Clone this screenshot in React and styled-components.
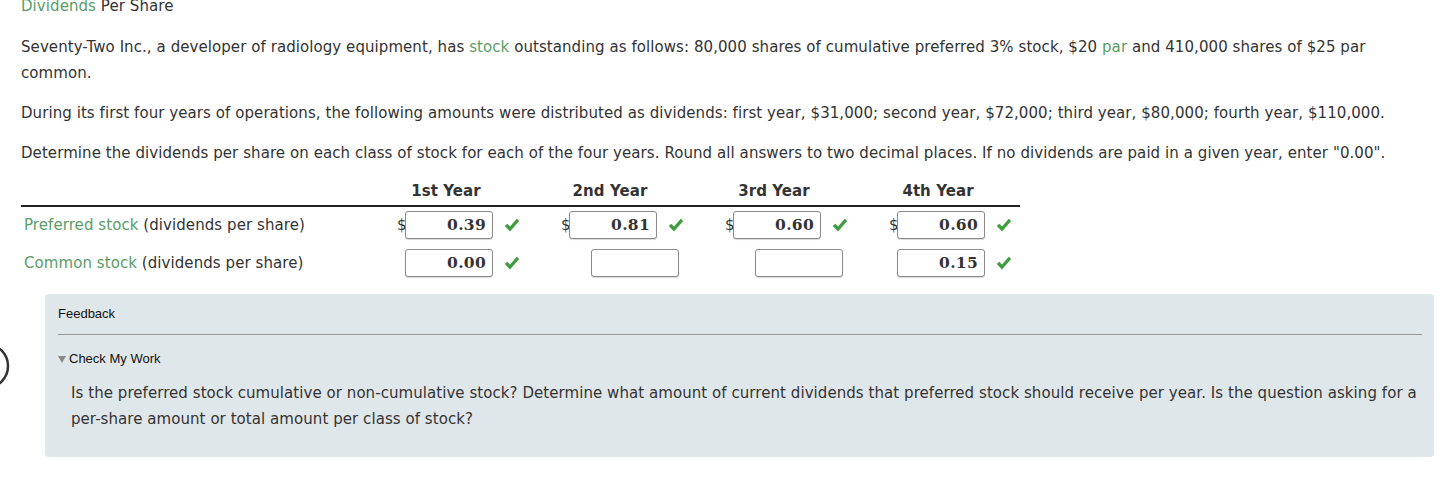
import styled, { createGlobalStyle } from "styled-components";

const GlobalStyle = createGlobalStyle`
  html, body {
    margin: 0;
    padding: 0;
    background: #fff;
  }
  body {
    font-family: "DejaVu Sans", Verdana, sans-serif;
    font-size: 15px;
    letter-spacing: 0.07px;
    color: #333;
  }
`;

const Page = styled.div`
  position: relative;
  width: 1442px;
  height: 492px;
  overflow: hidden;
  padding: 0 21px;
  box-sizing: border-box;
`;

const Term = styled.span`
  color: #5a9d68;
`;

const Title = styled.div`
  margin-top: -3px;
  line-height: 18px;
`;

const Para = styled.p`
  margin: 0;
  line-height: 26px;
  margin-top: ${(props) => props.$top || 0}px;
`;

const Table = styled.div`
  display: grid;
  grid-template-columns: 343px repeat(4, 164px);
  margin-top: 15px;
  width: 999px;
`;

const HeadCell = styled.div`
  font-weight: bold;
  text-align: center;
  line-height: 20px;
  padding-bottom: 4px;
  border-bottom: 2px solid #222;
`;

const LabelCell = styled.div`
  display: flex;
  align-items: center;
  height: ${(props) => (props.$first ? 36 : 40)}px;
  padding-left: 3px;
`;

const DataCell = styled.div`
  display: flex;
  align-items: center;
  justify-content: center;
  height: ${(props) => (props.$first ? 36 : 40)}px;
  padding-left: 50px;
`;

const Dollar = styled.span`
  flex-shrink: 0;
  width: 8px;
  font-size: 15px;
  text-align: right;
`;

const Input = styled.div`
  flex-shrink: 0;
  box-sizing: border-box;
  width: 88px;
  height: 28px;
  border: 1px solid #8a8a8a;
  border-radius: 3px;
  box-shadow: 0 1px 1px rgba(0, 0, 0, 0.15);
  background: #fff;
  font-family: "DejaVu Serif", Georgia, serif;
  font-weight: bold;
  font-size: 15.5px;
  letter-spacing: 0.3px;
  color: #333;
  text-align: right;
  line-height: 26px;
  padding-right: 6px;
`;

const CheckSlot = styled.span`
  flex-shrink: 0;
  width: 52px;
  padding-left: 11px;
  box-sizing: border-box;
  display: flex;
  align-items: center;
`;

const Feedback = styled.div`
  margin: 11px 0 0 24px;
  width: 1389px;
  height: 163px;
  box-sizing: border-box;
  background: #e0e7ea;
  border-radius: 4px;
  padding: 12px 12px 0 13px;
  font-family: "Liberation Sans", Arial, sans-serif;
  font-size: 13px;
  letter-spacing: 0;
  color: #111;
`;

const FeedbackHead = styled.div`
  line-height: 16px;
  padding-bottom: 12px;
  border-bottom: 1px solid #999;
`;

const Toggle = styled.div`
  display: flex;
  align-items: center;
  gap: 3px;
  margin-top: 16px;
  line-height: 16px;
`;

const Arrow = styled.span`
  width: 0;
  height: 0;
  border-left: 4px solid transparent;
  border-right: 4px solid transparent;
  border-top: 7px solid #8a8a8a;
`;

const Hint = styled.p`
  margin: 13px 0 0 13px;
  font-family: "DejaVu Sans", Verdana, sans-serif;
  font-size: 15px;
  letter-spacing: 0.06px;
  line-height: 26px;
  color: #333;
`;

const EdgeCircle = styled.svg`
  position: absolute;
  left: 0;
  top: 340px;
`;

function Check() {
  return (
    <svg width="16" height="15" viewBox="0 0 16 15">
      <path
        d="M0.8 8 L3.3 5.7 L6 8.6 L12.8 0.8 L15.2 3 L6 13.6 Z"
        fill="#3f9c3f"
      />
    </svg>
  );
}

function Answer({ value, dollar, checked }) {
  if (!checked) {
    return <Input>{value}</Input>;
  }
  return (
    <>
      <Dollar>{dollar ? "$" : ""}</Dollar>
      <Input>{value}</Input>
      <CheckSlot>
        <Check />
      </CheckSlot>
    </>
  );
}

const rows = [
  {
    term: "Preferred stock",
    values: [
      { value: "0.39", dollar: true, checked: true },
      { value: "0.81", dollar: true, checked: true },
      { value: "0.60", dollar: true, checked: true },
      { value: "0.60", dollar: true, checked: true },
    ],
  },
  {
    term: "Common stock",
    values: [
      { value: "0.00", dollar: false, checked: true },
      { value: "", dollar: false, checked: false },
      { value: "", dollar: false, checked: false },
      { value: "0.15", dollar: false, checked: true },
    ],
  },
];

export default function App() {
  return (
    <>
      <GlobalStyle />
      <Page>
        <Title>
          <Term>Dividends</Term> Per Share
        </Title>
        <Para $top={19}>
          Seventy-Two Inc., a developer of radiology equipment, has{" "}
          <Term>stock</Term> outstanding as follows: 80,000 shares of
          cumulative preferred 3% stock, $20 <Term>par</Term> and 410,000
          shares of $25 par common.
        </Para>
        <Para $top={14}>
          During its first four years of operations, the following amounts
          were distributed as dividends: first year, $31,000; second year,
          $72,000; third year, $80,000; fourth year, $110,000.
        </Para>
        <Para $top={14}>
          Determine the dividends per share on each class of stock for each of
          the four years. Round all answers to two decimal places. If no
          dividends are paid in a given year, enter "0.00".
        </Para>
        <Table>
          <HeadCell />
          <HeadCell>1st Year</HeadCell>
          <HeadCell>2nd Year</HeadCell>
          <HeadCell>3rd Year</HeadCell>
          <HeadCell>4th Year</HeadCell>
          {rows.map((row, r) => [
            <LabelCell key={row.term} $first={r === 0}>
              <Term>{row.term}</Term>&nbsp;(dividends per share)
            </LabelCell>,
            ...row.values.map((v, i) => (
              <DataCell key={row.term + i} $first={r === 0}>
                <Answer {...v} />
              </DataCell>
            )),
          ])}
        </Table>
        <Feedback>
          <FeedbackHead>Feedback</FeedbackHead>
          <Toggle>
            <Arrow />
            Check My Work
          </Toggle>
          <Hint>
            Is the preferred stock cumulative or non-cumulative stock?
            Determine what amount of current dividends that preferred stock
            should receive per year. Is the question asking for a per-share
            amount or total amount per class of stock?
          </Hint>
        </Feedback>
        <EdgeCircle width="12" height="52" viewBox="0 0 12 52">
          <circle cx="-14" cy="26" r="22" fill="none" stroke="#333" strokeWidth="2.5" />
        </EdgeCircle>
      </Page>
    </>
  );
}
